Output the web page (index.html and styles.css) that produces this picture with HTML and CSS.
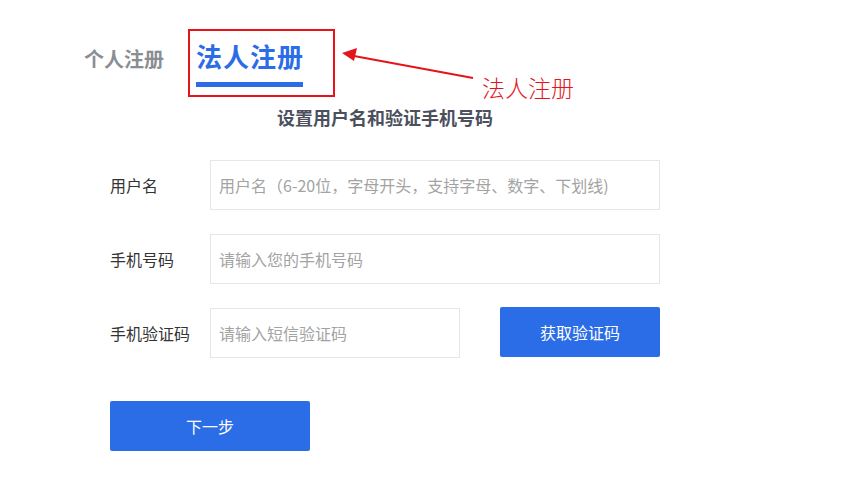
FILE: index.html
```html
<!DOCTYPE html>
<html lang="zh-CN">
<head>
<meta charset="utf-8">
<title>法人注册</title>
<link rel="stylesheet" href="styles.css">
</head>
<body>
<div class="page">
  <div class="tabs">
    <div class="tab">个人注册</div>
    <div class="tab active">法人注册<span class="bar"></span></div>
  </div>
  <form class="form">
    <h2 class="subtitle">设置用户名和验证手机号码</h2>
    <div class="row">
      <label class="label">用户名</label>
      <input class="input" type="text" placeholder="用户名（6-20位，字母开头，支持字母、数字、下划线)">
    </div>
    <div class="row">
      <label class="label">手机号码</label>
      <input class="input" type="text" placeholder="请输入您的手机号码">
    </div>
    <div class="row">
      <label class="label">手机验证码</label>
      <input class="input short" type="text" placeholder="请输入短信验证码">
      <button class="btn code" type="button">获取验证码</button>
    </div>
    <button class="btn next" type="button">下一步</button>
  </form>

  <div class="anno-box"></div>
  <svg class="anno-arrow" width="150" height="40" viewBox="0 0 150 40">
    <line x1="14" y1="8" x2="133" y2="30" stroke="#e5141b" stroke-width="2"/>
    <polygon points="2,5 17,0 14,13" fill="#e5141b"/>
  </svg>
  <div class="anno-text">法人注册</div>
</div>
</body>
</html>
```
FILE: styles.css
```css
* { box-sizing: border-box; }
html, body { margin: 0; padding: 0; background: #fff; }
body {
  font-family: "Noto Sans CJK SC", "Noto Sans", sans-serif;
  color: #333;
}
.page {
  position: relative;
  width: 846px;
  height: 494px;
  padding-top: 41px;
}
.tabs {
  display: flex;
  align-items: flex-start;
  padding-left: 84px;
  height: 64px;
}
.tab {
  font-size: 20px;
  font-weight: 700;
  line-height: 30px;
  color: #8a8d93;
  margin-top: 3px;
}
.tab.active {
  margin-top: 0;
  margin-left: 32px;
  font-size: 26px;
  letter-spacing: 1px;
  color: #2b6de6;
  display: flex;
  flex-direction: column;
}
.tab .bar {
  display: block;
  height: 5px;
  margin-top: 11px;
  margin-right: 1px;
  background: #2b6de6;
}
.form {
  margin: 0 0 0 110px;
  width: 550px;
}
.subtitle {
  margin: 0 0 31px;
  text-align: center;
  font-size: 18px;
  line-height: 24px;
  font-weight: 700;
  color: #4b505c;
}
.row {
  display: flex;
  align-items: center;
  height: 50px;
  margin-bottom: 24px;
}
.row:nth-of-type(3) { margin-bottom: 0; }
.label {
  width: 100px;
  font-size: 16px;
  color: #333;
}
.input {
  width: 450px;
  height: 50px;
  border: 1px solid #e6e6e6;
  padding: 0 8px;
  font-family: inherit;
  font-size: 16px;
  color: #333;
  outline: none;
  background: #fff;
}
.input::placeholder { color: #a3a3a3; }
.input.short { width: 250px; }
.btn {
  height: 50px;
  border: 0;
  border-radius: 2px;
  background: #2b6de6;
  color: #fff;
  font-family: inherit;
  font-size: 16px;
  padding: 0;
}
.btn.code {
  width: 160px;
  margin-left: 40px;
  margin-top: -2px;
}
.btn.next {
  display: block;
  width: 200px;
  margin-top: 43px;
}
.anno-box {
  position: absolute;
  left: 188px;
  top: 29px;
  width: 147px;
  height: 68px;
  border: 2px solid #e5141b;
}
.anno-arrow {
  position: absolute;
  left: 340px;
  top: 48px;
}
.anno-text {
  position: absolute;
  left: 482px;
  top: 72px;
  font-size: 23px;
  line-height: 30px;
  font-weight: 300;
  color: #e5141b;
}
```
